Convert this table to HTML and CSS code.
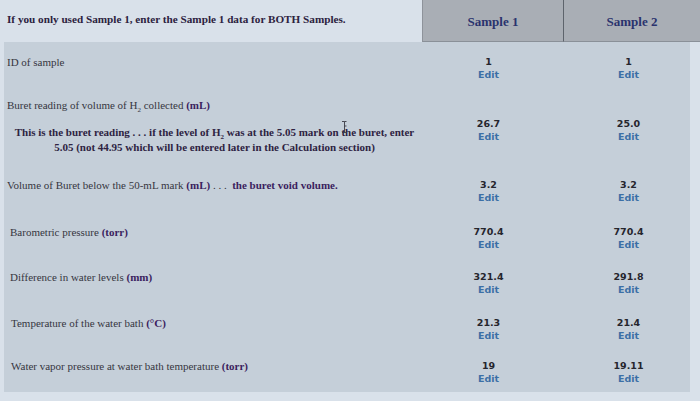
FILE: index.html
```html
<!DOCTYPE html>
<html>
<head>
<meta charset="utf-8">
<link rel="stylesheet" href="styles.css">
</head>
<body>
<div class="page">
  <div class="head">
    <div class="title">If you only used Sample 1, enter the Sample 1 data for BOTH Samples.</div>
    <div class="hcell">Sample 1</div>
    <div class="hcell last">Sample 2</div>
  </div>
  <div class="grid">
    <div class="row r1">
      <div class="label">ID of sample</div>
      <div class="val"><span class="num">1</span><a class="edit">Edit</a></div>
      <div class="val v2"><span class="num">1</span><a class="edit">Edit</a></div>
    </div>
    <div class="row r2">
      <div class="label multi">
        <div>Buret reading of volume of H<sub>2</sub> collected <b>(mL)</b></div>
        <p class="note">This is the buret reading . . . if the level of H<sub>2</sub> was at the 5.05 mark on the buret, enter<br>5.05 (not 44.95 which will be entered later in the Calculation section)</p>
        <svg class="cursor" width="7" height="12" viewBox="0 0 7 12"><path d="M1 0.5h2.5M3.5 0.5h2M3.5 0.5v11M1 11.5h5M3.5 5h2" stroke="#3a3a44" stroke-width="0.9" fill="none"/></svg>
      </div>
      <div class="val"><span class="num">26.7</span><a class="edit">Edit</a></div>
      <div class="val v2"><span class="num">25.0</span><a class="edit">Edit</a></div>
    </div>
    <div class="row r3">
      <div class="label">Volume of Buret below the 50-mL mark <b>(mL)</b> . . .&nbsp; <b>the buret void volume.</b></div>
      <div class="val"><span class="num">3.2</span><a class="edit">Edit</a></div>
      <div class="val v2"><span class="num">3.2</span><a class="edit">Edit</a></div>
    </div>
    <div class="row r4">
      <div class="label">Barometric pressure <b>(torr)</b></div>
      <div class="val"><span class="num">770.4</span><a class="edit">Edit</a></div>
      <div class="val v2"><span class="num">770.4</span><a class="edit">Edit</a></div>
    </div>
    <div class="row r5">
      <div class="label">Difference in water levels <b>(mm)</b></div>
      <div class="val"><span class="num">321.4</span><a class="edit">Edit</a></div>
      <div class="val v2"><span class="num">291.8</span><a class="edit">Edit</a></div>
    </div>
    <div class="row r6">
      <div class="label">Temperature of the water bath <b>(°C)</b></div>
      <div class="val"><span class="num">21.3</span><a class="edit">Edit</a></div>
      <div class="val v2"><span class="num">21.4</span><a class="edit">Edit</a></div>
    </div>
    <div class="row r7">
      <div class="label">Water vapor pressure at water bath temperature <b>(torr)</b></div>
      <div class="val"><span class="num">19</span><a class="edit">Edit</a></div>
      <div class="val v2"><span class="num">19.11</span><a class="edit">Edit</a></div>
    </div>
  </div>
</div>
</body>
</html>
```
FILE: styles.css
```css
html, body {
  margin: 0;
  padding: 0;
  background: #d9e1ea;
  width: 700px;
  height: 401px;
  overflow: hidden;
}
.page {
  font-family: "Liberation Serif", "Times New Roman", serif;
  color: #36363f;
}
.head {
  display: grid;
  grid-template-columns: 422px 141px 137px;
  height: 42px;
}
.title {
  font-weight: bold;
  font-size: 11.2px;
  color: #2c2240;
  padding-left: 7px;
  padding-top: 13px;
  white-space: nowrap;
}
.hcell {
  background: #a9aeb5;
  border-left: 1px solid #8e939b;
  border-bottom: 1px solid #8a9098;
  font-weight: bold;
  font-size: 13px;
  color: #2b336e;
  display: flex;
  align-items: center;
  justify-content: center;
  padding-top: 2px;
}
.hcell.last {
  border-left-color: #5e646c;
}
.grid {
  margin-left: 4px;
  width: 686px;
  background: #c5cfd9;
}
.row {
  display: grid;
  grid-template-columns: 418px 141px 127px;
  align-items: center;
}
.r1 { height: 52px; }
.r2 { height: 72px; }
.r3 { height: 50px; }
.r4 { height: 44px; }
.r5 { height: 46px; }
.r6 { height: 45px; }
.r7 { height: 41px; }
.label {
  font-size: 11px;
  padding-left: 3px;
  padding-bottom: 12px;
  white-space: nowrap;
  position: relative;
}
.r4 .label, .r5 .label { padding-left: 6px; }
.r6 .label, .r7 .label { padding-left: 7px; }
.label b {
  color: #3b1e5e;
}
.label.multi {
  padding-bottom: 6px;
  padding-left: 3px;
}
sub {
  font-size: 7px;
  line-height: 0;
}
.note {
  margin: 14px 0 0 0;
  text-align: center;
  font-weight: bold;
  font-size: 11px;
  line-height: 15px;
  color: #2e2342;
}
.cursor {
  position: absolute;
  left: 337px;
  top: 22px;
}
.val {
  display: flex;
  flex-direction: column;
  align-items: center;
  font-family: "DejaVu Sans", Verdana, sans-serif;
  font-weight: bold;
  font-size: 9.5px;
  line-height: 13px;
  padding-right: 8px;
}
.v2 {
  padding-right: 0;
  padding-left: 4px;
}
.num {
  color: #25252d;
}
.edit {
  color: #3c6fa6;
  font-size: 9.5px;
}
```
